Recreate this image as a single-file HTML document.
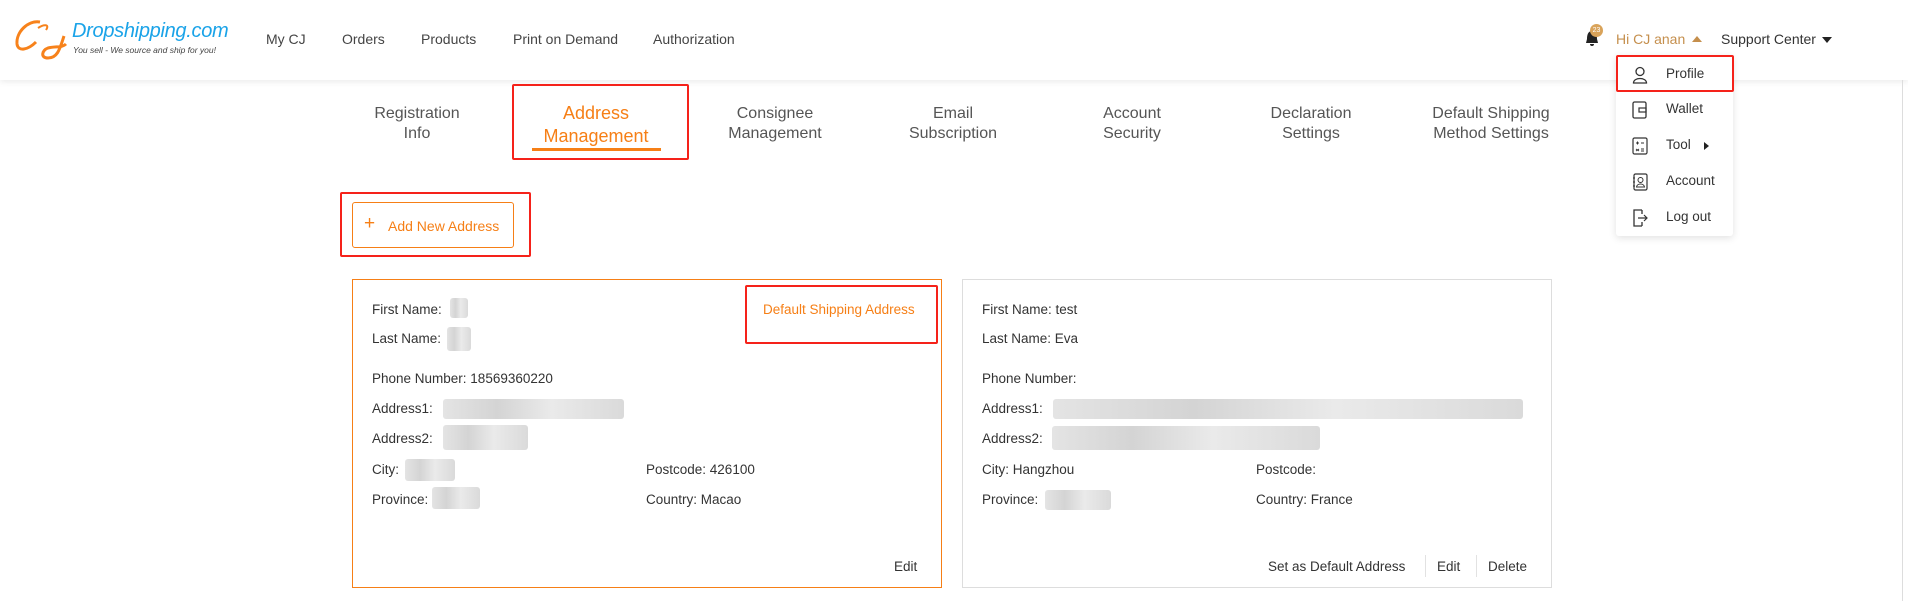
<!DOCTYPE html>
<html><head><meta charset="utf-8"><style>
*{margin:0;padding:0;box-sizing:border-box}
body{width:1908px;height:601px;overflow:hidden;background:#fff;font-family:"Liberation Sans",Arial,sans-serif;color:#333;position:relative}
.a{position:absolute;white-space:nowrap}
.hdr{position:absolute;left:0;top:0;width:1908px;height:80px;background:#fff;box-shadow:0 2px 6px rgba(0,0,0,.08)}
.nav{font-size:14px;color:#444;top:31px}
.tab{position:absolute;text-align:center;font-size:16px;color:#555;line-height:20px;width:180px}
.card{position:absolute;top:279px;height:309px;width:590px;border:1px solid #ddd}
.t{position:absolute;font-size:13.5px;color:#333;white-space:nowrap}
.blur{position:absolute;background:linear-gradient(90deg,#e4e4e4,#d4d4d4 30%,#eaeaea 60%,#dadada);border-radius:3px}
.mi{position:absolute;left:1632px;font-size:13.5px;color:#333}
.mi span{position:absolute;left:34px;top:0;white-space:nowrap}
.rb{position:absolute;border:2px solid #f5221a;border-radius:2px}
</style></head><body>
<div class="hdr"></div>
<!-- logo -->
<svg class="a" style="left:14px;top:18px" width="62" height="44" viewBox="0 0 62 44">
<path d="M26 4 C14 2 2 14 3 26 C4 34 14 32 22 24" fill="none" stroke="#f7821b" stroke-width="3"/>
<path d="M24 10 C30 6 36 6 32 12" fill="none" stroke="#f7821b" stroke-width="2"/>
<path d="M50 18 C46 30 44 40 34 40 C26 40 28 32 34 30 C42 28 48 30 52 26" fill="none" stroke="#f7821b" stroke-width="3"/>
</svg>
<div class="a" style="left:72px;top:20px;font-size:20px;color:#1aa3e8;font-style:italic;letter-spacing:-0.3px">Dropshipping.com</div>
<div class="a" style="left:73px;top:45px;font-size:8.5px;color:#444;font-style:italic">You sell - We source and ship for you!</div>
<div class="a nav" style="left:266px">My CJ</div>
<div class="a nav" style="left:342px">Orders</div>
<div class="a nav" style="left:421px">Products</div>
<div class="a nav" style="left:513px">Print on Demand</div>
<div class="a nav" style="left:653px">Authorization</div>
<!-- bell -->
<svg class="a" style="left:1585px;top:30px" width="14" height="18" viewBox="0 0 14 18"><path d="M7 1 C3 1 2 5 2 9 L1 13 H13 L12 9 C12 5 11 1 7 1Z M5 14 a2 2 0 0 0 4 0Z" fill="#222"/></svg>
<div class="a" style="left:1590px;top:24px;width:13px;height:13px;border-radius:50%;background:#d9a35a;color:#fff;font-size:7px;text-align:center;line-height:13px">23</div>
<div class="a" style="left:1616px;top:31px;font-size:14px;color:#c58f4d">Hi CJ anan</div>
<div class="a" style="left:1692px;top:36px;width:0;height:0;border-left:5px solid transparent;border-right:5px solid transparent;border-bottom:6px solid #c58f4d"></div>
<div class="a" style="left:1721px;top:31px;font-size:14px;color:#333">Support Center</div>
<div class="a" style="left:1822px;top:37px;width:0;height:0;border-left:5px solid transparent;border-right:5px solid transparent;border-top:6px solid #222"></div>
<!-- scrollbar line -->
<div class="a" style="left:1902px;top:80px;width:1px;height:521px;background:#ddd"></div>
<!-- dropdown -->
<div class="a" style="left:1616px;top:55px;width:117px;height:181px;background:#fff;border-radius:3px;box-shadow:0 2px 8px rgba(0,0,0,.12)"></div>
<div class="mi" style="top:66px"><svg width="16" height="18" viewBox="0 0 16 18"><circle cx="8" cy="5.5" r="4" fill="none" stroke="#333" stroke-width="1.3"/><path d="M1.5 17 C1.5 11 14.5 11 14.5 17Z" fill="none" stroke="#333" stroke-width="1.3"/></svg><span>Profile</span></div>
<div class="mi" style="top:101px"><svg width="16" height="18" viewBox="0 0 16 18"><rect x="1" y="1" width="13" height="16" rx="1.5" fill="none" stroke="#333" stroke-width="1.3"/><rect x="7" y="7" width="7" height="4" fill="none" stroke="#333" stroke-width="1.2"/></svg><span>Wallet</span></div>
<div class="mi" style="top:137px"><svg width="16" height="18" viewBox="0 0 16 18"><rect x="1" y="1" width="14" height="16" rx="1.5" fill="none" stroke="#333" stroke-width="1.2"/><path d="M4 6h3M5.5 4.5v3M9 6h3M4 12l3 2M7 12l-3 2M9 12h3M9 14h3" stroke="#333" stroke-width="1"/></svg><span>Tool</span></div>
<div class="a" style="left:1704px;top:142px;width:0;height:0;border-top:4px solid transparent;border-bottom:4px solid transparent;border-left:5px solid #222"></div>
<div class="mi" style="top:173px"><svg width="16" height="18" viewBox="0 0 16 18"><rect x="2" y="1" width="13" height="16" rx="1.5" fill="none" stroke="#333" stroke-width="1.2"/><circle cx="8.5" cy="7" r="2.5" fill="none" stroke="#333"/><path d="M4.5 14 C5 10 12 10 12.5 14Z" fill="none" stroke="#333"/><path d="M1 5h2M1 9h2M1 13h2" stroke="#333"/></svg><span>Account</span></div>
<div class="mi" style="top:209px"><svg width="16" height="18" viewBox="0 0 16 18"><path d="M10 1 H2 V17 H10 M10 1v4M10 13v4" fill="none" stroke="#333" stroke-width="1.3"/><path d="M6 9h9M12 6l3 3-3 3" fill="none" stroke="#333" stroke-width="1.2"/></svg><span>Log out</span></div>
<div class="rb" style="left:1616px;top:55px;width:118px;height:37px"></div>
<!-- tabs -->
<div class="tab" style="left:327px;top:104px">Registration<br>Info</div>
<div class="tab" style="left:506px;top:102px;color:#f67f16;font-size:18px;line-height:23px">Address<br>Management</div>
<div class="a" style="left:532px;top:148px;width:129px;height:3px;background:#f67f16"></div>
<div class="rb" style="left:512px;top:84px;width:177px;height:76px"></div>
<div class="tab" style="left:685px;top:104px">Consignee<br>Management</div>
<div class="tab" style="left:863px;top:104px">Email<br>Subscription</div>
<div class="tab" style="left:1042px;top:104px">Account<br>Security</div>
<div class="tab" style="left:1221px;top:104px">Declaration<br>Settings</div>
<div class="tab" style="left:1401px;top:104px">Default Shipping<br>Method Settings</div>
<!-- add -->
<div class="rb" style="left:340px;top:192px;width:191px;height:65px"></div>
<div class="a" style="left:352px;top:202px;width:162px;height:46px;border:1px solid #f67f16;border-radius:3px"></div>
<div class="a" style="left:364px;top:214px;font-size:19px;color:#f67f16;line-height:20px">+</div>
<div class="a" style="left:388px;top:218px;font-size:14px;color:#f67f16">Add New Address</div>
<!-- card1 -->
<div class="card" style="left:352px;border-color:#f67f16"></div>
<div class="t" style="left:372px;top:302px">First Name:</div><div class="blur" style="left:450px;top:298px;width:18px;height:20px"></div>
<div class="t" style="left:372px;top:331px">Last Name:</div><div class="blur" style="left:447px;top:327px;width:24px;height:24px"></div>
<div class="t" style="left:372px;top:371px">Phone Number: 18569360220</div>
<div class="t" style="left:372px;top:401px">Address1:</div><div class="blur" style="left:443px;top:399px;width:181px;height:20px"></div>
<div class="t" style="left:372px;top:431px">Address2:</div><div class="blur" style="left:443px;top:425px;width:85px;height:25px"></div>
<div class="t" style="left:372px;top:462px">City:</div><div class="blur" style="left:405px;top:459px;width:50px;height:22px"></div>
<div class="t" style="left:646px;top:462px">Postcode: 426100</div>
<div class="t" style="left:372px;top:492px">Province:</div><div class="blur" style="left:432px;top:487px;width:48px;height:22px"></div>
<div class="t" style="left:646px;top:492px">Country: Macao</div>
<div class="t" style="left:894px;top:559px">Edit</div>
<div class="rb" style="left:745px;top:285px;width:193px;height:59px"></div>
<div class="t" style="left:763px;top:302px;color:#f67f16">Default Shipping Address</div>
<!-- card2 -->
<div class="card" style="left:962px"></div>
<div class="t" style="left:982px;top:302px">First Name: test</div>
<div class="t" style="left:982px;top:331px">Last Name: Eva</div>
<div class="t" style="left:982px;top:371px">Phone Number:</div>
<div class="t" style="left:982px;top:401px">Address1:</div><div class="blur" style="left:1053px;top:399px;width:470px;height:20px"></div>
<div class="t" style="left:982px;top:431px">Address2:</div><div class="blur" style="left:1052px;top:426px;width:268px;height:24px"></div>
<div class="t" style="left:982px;top:462px">City: Hangzhou</div>
<div class="t" style="left:1256px;top:462px">Postcode:</div>
<div class="t" style="left:982px;top:492px">Province:</div><div class="blur" style="left:1045px;top:490px;width:66px;height:20px"></div>
<div class="t" style="left:1256px;top:492px">Country: France</div>
<div class="t" style="left:1268px;top:559px">Set as Default Address</div>
<div class="a" style="left:1425px;top:555px;width:1px;height:22px;background:#e2e2e2"></div>
<div class="t" style="left:1437px;top:559px">Edit</div>
<div class="a" style="left:1476px;top:555px;width:1px;height:22px;background:#e2e2e2"></div>
<div class="t" style="left:1488px;top:559px">Delete</div>
</body></html>
